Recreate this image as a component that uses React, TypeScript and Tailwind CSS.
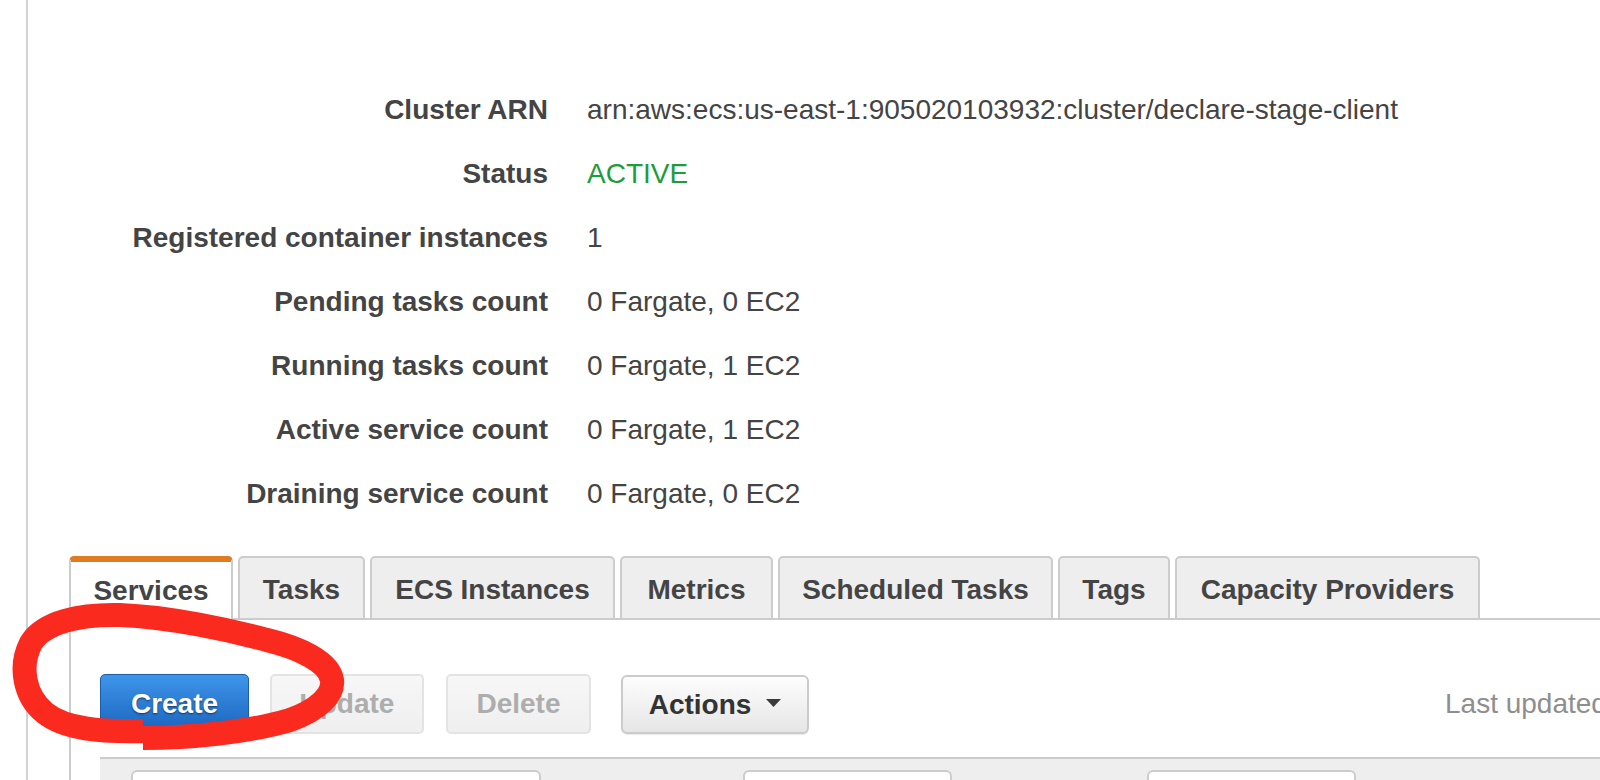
import React from 'react';

const DETAILS: { label: string; value: string; green?: boolean }[] = [
  { label: 'Cluster ARN', value: 'arn:aws:ecs:us-east-1:905020103932:cluster/declare-stage-client' },
  { label: 'Status', value: 'ACTIVE', green: true },
  { label: 'Registered container instances', value: '1' },
  { label: 'Pending tasks count', value: '0 Fargate, 0 EC2' },
  { label: 'Running tasks count', value: '0 Fargate, 1 EC2' },
  { label: 'Active service count', value: '0 Fargate, 1 EC2' },
  { label: 'Draining service count', value: '0 Fargate, 0 EC2' },
];

// tab widths follow the console's rendering
const TABS: { name: string; w: string }[] = [
  { name: 'Services', w: 'w-[164px]' },
  { name: 'Tasks', w: 'w-[127px]' },
  { name: 'ECS Instances', w: 'w-[245px]' },
  { name: 'Metrics', w: 'w-[153px]' },
  { name: 'Scheduled Tasks', w: 'w-[275px]' },
  { name: 'Tags', w: 'w-[112px]' },
  { name: 'Capacity Providers', w: 'w-[305px]' },
];

const App: React.FC = () => {
  return (
    <div className="relative w-[1600px] h-[780px] overflow-hidden bg-white flex font-['Liberation_Sans',Arial,sans-serif] text-[28px]">
      <div className="ml-[26px] flex-1 min-w-0 border-l-2 border-[#d2d2d2] flex flex-col">
        {/* Cluster details */}
        <div className="pt-[78px] grid grid-cols-[520px_1fr] gap-x-[39px]">
          {DETAILS.map((row) => (
            <React.Fragment key={row.label}>
              <div className="text-right font-bold text-[#444] leading-[64px] whitespace-nowrap">{row.label}</div>
              <div className={`leading-[64px] whitespace-nowrap ${row.green ? 'text-[#1d9c3b]' : 'text-[#444]'}`}>
                {row.value}
              </div>
            </React.Fragment>
          ))}
        </div>

        {/* Tabs */}
        <div className="ml-[41px] mt-[30px] flex flex-col flex-1">
          <div className="flex items-end gap-[5px] border-b-2 border-[#cccccc]">
            {TABS.map((tab, idx) =>
              idx === 0 ? (
                <div
                  key={tab.name}
                  className={`${tab.w} h-[64px] shrink-0 -mb-[2px] flex items-center justify-center bg-white border-x-2 border-[#cccccc] border-t-[6px] border-t-[#df7b20] rounded-t-[5px] font-bold text-[#444] whitespace-nowrap`}
                >
                  {tab.name}
                </div>
              ) : (
                <div
                  key={tab.name}
                  className={`${tab.w} h-[64px] shrink-0 -mb-[2px] pt-[4px] flex items-center justify-center bg-[#eeeeee] border-2 border-[#cccccc] rounded-t-[5px] font-bold text-[#444] whitespace-nowrap`}
                >
                  {tab.name}
                </div>
              )
            )}
          </div>

          <div className="flex-1 border-l-2 border-[#cccccc] pl-[29px] pt-[53px] flex flex-col">
            <div className="flex items-center whitespace-nowrap">
              <button className="w-[149px] h-[60px] shrink-0 rounded-[5px] border border-[#1a5cae] bg-gradient-to-b from-[#3f95ea] to-[#1a64bd] text-white font-bold [text-shadow:0_1px_2px_rgba(0,0,0,0.55)]">
                Create
              </button>
              <button className="ml-[21px] w-[154px] h-[60px] shrink-0 rounded-[5px] border-2 border-[#e3e3e3] bg-gradient-to-b from-[#f7f7f7] to-[#efefef] text-[#adadad] font-bold">
                Update
              </button>
              <button className="ml-[22px] w-[145px] h-[60px] shrink-0 rounded-[5px] border-2 border-[#e3e3e3] bg-gradient-to-b from-[#f7f7f7] to-[#efefef] text-[#adadad] font-bold">
                Delete
              </button>
              <button className="ml-[30px] mt-[2px] w-[188px] h-[59px] shrink-0 rounded-[6px] border-2 border-[#cbcbcb] bg-gradient-to-b from-[#fdfdfd] to-[#e6e6e6] text-[#333] font-bold flex items-center justify-center gap-[15px] shadow-[0_1px_1px_rgba(0,0,0,0.08)]">
                <span>Actions</span>
                <svg width="15" height="8" viewBox="0 0 15 8" className="mt-[-4px]">
                  <path d="M0 0 L15 0 L7.5 8 Z" fill="#3a3a3a" />
                </svg>
              </button>
              <span className="ml-[636px] shrink-0 text-[#8e8e8e]">Last updated on June 3, 2020</span>
            </div>

            {/* Filter band */}
            <div className="mt-[23px] flex-1 border-t-2 border-[#cccccc] bg-[#eeeeee] pl-[31px] pt-[11px] flex items-start">
              <div className="w-[410px] h-[44px] shrink-0 rounded-[6px] border-2 border-[#cccccc] bg-white" />
              <div className="ml-[202px] w-[209px] h-[44px] shrink-0 rounded-[6px] border-2 border-[#cccccc] bg-white" />
              <div className="ml-[195px] w-[209px] h-[44px] shrink-0 rounded-[6px] border-2 border-[#cccccc] bg-white" />
            </div>
          </div>
        </div>
      </div>

      {/* Hand-drawn annotation */}
      <svg className="absolute inset-0 pointer-events-none" width="1600" height="780" viewBox="0 0 1600 780">
        <path
          d="M143 738 C190 738 250 732 290 720 C318 710 334 695 332 680 C329 662 300 648 267 640 C230 630 170 617 120 615 C80 614 44 622 31 643 C19 666 24 696 45 713 C65 729 100 732 143 731"
          fill="none"
          stroke="#fb2a1f"
          strokeWidth="24"
          strokeLinecap="butt"
          strokeLinejoin="round"
        />
      </svg>
    </div>
  );
};

export default App;
